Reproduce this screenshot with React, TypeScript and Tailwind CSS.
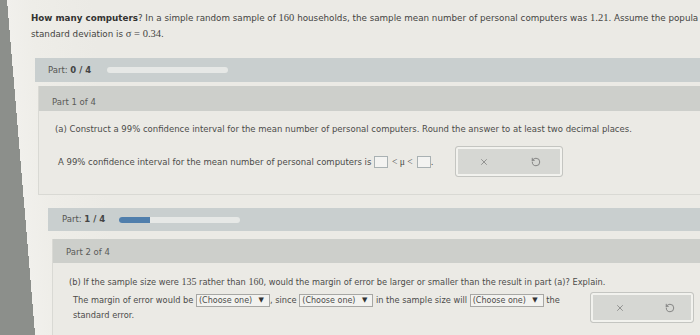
import { X, RotateCcw } from "lucide-react";

const sans = "font-['DejaVu_Sans',sans-serif]";
const serif = "font-['Liberation_Serif',serif]";

function Track({ blue }: { blue: boolean }) {
  return (
    <div className="w-[121px] h-[6px] rounded-[3px] bg-[#e6e8e6] flex overflow-hidden">
      {blue ? <div className="w-[31px] h-full bg-[#4f7eac]" /> : null}
    </div>
  );
}

function Box() {
  return <span className="inline-block w-[14px] h-[12px] border border-[#a9b1b3] bg-[#f3f3f1] align-middle" />;
}

function Choose() {
  return (
    <span className="inline-flex items-center h-[13px] w-[74px] border border-[#a7a7a4] bg-[#f2f2ef] px-[2px] align-middle justify-between text-[8px]">
      <span>(Choose one)</span>
      <span className="text-[7px] text-[#333] mr-[3px]">▼</span>
    </span>
  );
}

function ActionBox({ w, pl, gap }: { w: string; pl: string; gap: string }) {
  return (
    <div className={`${w} h-[31px] rounded-[3px] border border-[#c4c5c1] bg-[#d6d7d3] shadow-[inset_0_0_0_2px_#f2f2ee] flex items-center ${pl} ${gap} text-[#6a6a6a]`}>
      <X size={10} strokeWidth={1.5} />
      <RotateCcw size={10} strokeWidth={1.8} />
    </div>
  );
}

export default function App() {
  return (
    <div
      className={`w-[700px] h-[335px] overflow-hidden flex flex-col text-[#4c4c4a] ${sans} bg-[linear-gradient(85.2deg,#8c8f8b_35px,#f1f0ec_35px,#eeede8_60px,#ebeae5_120px)]`}
    >
      {/* Title */}
      <div className="pt-[10px] pl-[31px] text-[8.75px] leading-[16px] whitespace-nowrap text-[#444442]">
        <div>
          <span className="font-bold text-[#333331]">How many computers</span>? In a simple random sample of{" "}
          <span className={`${serif} text-[10.5px]`}>160</span> households, the sample mean number of personal computers was{" "}
          <span className={`${serif} text-[10.5px]`}>1.21</span>. Assume the popula
        </div>
        <div>
          standard deviation is <span className={`${serif} text-[10.5px]`}>σ = 0.34</span>.
        </div>
      </div>

      {/* Part 0/4 */}
      <div className="mt-[16px] ml-[35px] h-[24px] bg-[#c9cfcf] flex items-center pl-[13px] text-[8.5px] text-[#555553]">
        <span className="w-[59px]">
          Part: <span className="font-bold text-[#444]">0 / 4</span>
        </span>
        <Track blue={false} />
      </div>

      {/* Card 1 */}
      <div className="mt-[4px] ml-[38px] border-l border-b border-[#d9d9d4] bg-[#ebeae5]">
        <div className="h-[25px] bg-[#cdcfcb] pl-[13px] pt-[10px] text-[8.5px] leading-[12px] text-[#5a5a58]">Part 1 of 4</div>
        <div className="pl-[16px] pt-[12px] pb-[17px] text-[8.5px] leading-[12px]">
          <div className="whitespace-nowrap">
            (a) Construct a 99% confidence interval for the mean number of personal computers. Round the answer to at least two decimal places.
          </div>
          <div className="mt-[11px] flex items-center">
            <div className="w-[400px] pl-[3px] whitespace-nowrap flex items-center">
              <span>A 99% confidence interval for the mean number of personal computers is&nbsp;</span>
              <Box />
              <span className={`${serif} text-[9.5px] px-[4px]`}>&lt; μ &lt;</span>
              <Box />
              <span>.</span>
            </div>
            <ActionBox w="w-[108px]" pl="pl-[23px]" gap="gap-[42px]" />
          </div>
        </div>
      </div>

      {/* Part 1/4 */}
      <div className="mt-[13px] ml-[48px] h-[23px] bg-[#c9cfcf] flex items-center pl-[14px] text-[8.5px] text-[#555553]">
        <span className="w-[57px]">
          Part: <span className="font-bold text-[#444]">1 / 4</span>
        </span>
        <Track blue={true} />
      </div>

      {/* Card 2 */}
      <div className="mt-[8px] ml-[52px] flex-1 border-l border-[#d9d9d4] bg-[#ebeae5]">
        <div className="h-[24px] bg-[#cdcfcb] pl-[13px] pt-[7px] text-[8.5px] leading-[12px] text-[#5a5a58]">Part 2 of 4</div>
        <div className="pl-[16px] pt-[13px] text-[8.25px] leading-[12px]">
          <div className="whitespace-nowrap">
            (b) If the sample size were <span className={`${serif} text-[10px]`}>135</span> rather than{" "}
            <span className={`${serif} text-[10px]`}>160</span>, would the margin of error be larger or smaller than the result in part (a)? Explain.
          </div>
          <div className="mt-[4px] flex items-center">
            <div className="w-[521px] pl-[4px] leading-[15px]">
              <div className="whitespace-nowrap">
                The margin of error would be <Choose />, since <Choose /> in the sample size will <Choose /> the
              </div>
              <div>standard error.</div>
            </div>
            <ActionBox w="w-[104px]" pl="pl-[24px]" gap="gap-[40px]" />
          </div>
        </div>
      </div>
    </div>
  );
}
